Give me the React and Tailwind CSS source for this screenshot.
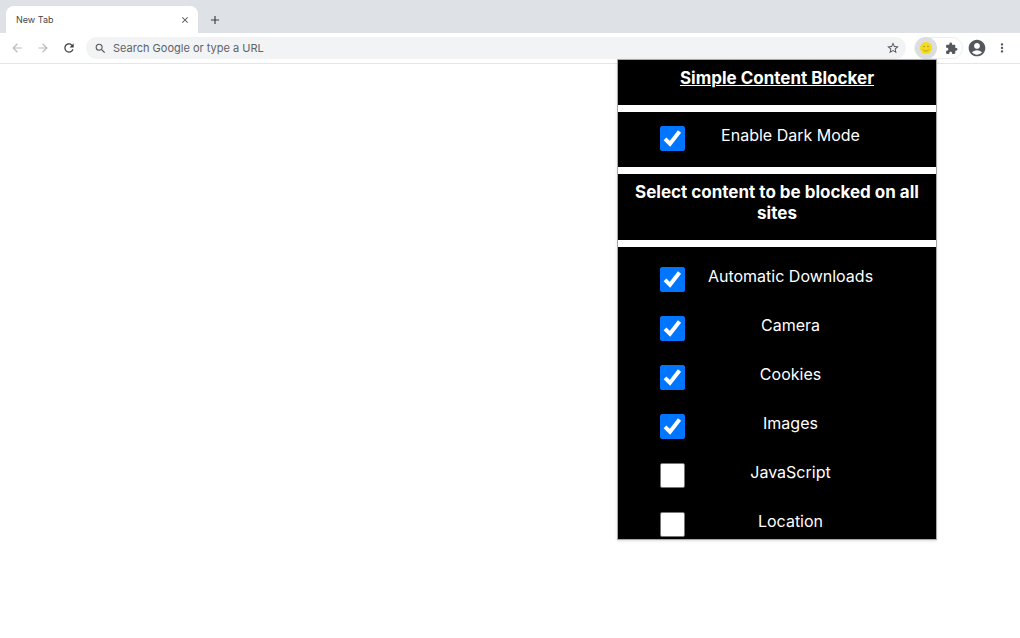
import React, { useState } from 'react';
import {
  MdAccountCircle,
  MdAdd,
  MdArrowBack,
  MdArrowForward,
  MdClose,
  MdExtension,
  MdMoreVert,
  MdRefresh,
  MdSearch,
  MdStarBorder,
} from 'react-icons/md';

const contentTypes = [
  { id: 'downloads', label: 'Automatic Downloads' },
  { id: 'camera', label: 'Camera' },
  { id: 'cookies', label: 'Cookies' },
  { id: 'images', label: 'Images' },
  { id: 'javascript', label: 'JavaScript' },
  { id: 'location', label: 'Location' },
];

const SmileyIcon = () => (
  <svg viewBox="0 0 14 14" className="h-3.5 w-3.5">
    <circle cx="7" cy="7" r="6" fill="#f2dc1c" />
    <circle cx="5" cy="5.5" r="0.8" fill="#a3922a" />
    <circle cx="9" cy="5.5" r="0.8" fill="#a3922a" />
    <path d="M4 8.5c1.2 2 4.8 2 6 0" fill="none" stroke="#b8a31c" strokeWidth="1" />
  </svg>
);

const CheckRow = ({ id, label, checked, onChange }) => (
  <div className="flex pl-[42px] pr-10">
    <span className="relative h-[25px] w-[25px] shrink-0">
      <input
        id={id}
        type="checkbox"
        checked={checked}
        onChange={onChange}
        className="block h-[25px] w-[25px] appearance-none rounded-xs border border-[#767676] bg-white checked:border-[#0075ff] checked:bg-[#0075ff]"
      />
      {checked && (
        <svg viewBox="0 0 25 25" className="pointer-events-none absolute inset-0 h-full w-full">
          <path d="M5 12.8l5 5L19.5 5.500" fill="none" stroke="#fff" strokeWidth="4" />
        </svg>
      )}
    </span>
    <label htmlFor={id} className="flex-1 text-center text-base leading-[18px]">
      {label}
    </label>
  </div>
);

const TabStrip = () => (
  <div className="flex h-[33px] items-end bg-[#dee1e6] pl-1.5">
    <div className="flex h-[27px] w-48 items-center justify-between rounded-t-lg bg-white pl-2.5 pr-2 text-[#45494d]">
      <span className="text-[9px]">New Tab</span>
      <button aria-label="Close tab">
        <MdClose size={10} />
      </button>
    </div>
    <button aria-label="New tab" className="flex h-[27px] items-center pl-2.5 text-[#3c4043]">
      <MdAdd size={14} />
    </button>
  </div>
);

const Toolbar = () => (
  <div className="flex h-[31px] items-center border-b border-[#e4e6e8] pl-2.5 pr-[11px] text-[#54585c]">
    <div className="flex gap-3">
      <button aria-label="Back" className="text-[#b9bbbe]">
        <MdArrowBack size={14} />
      </button>
      <button aria-label="Forward" className="text-[#b9bbbe]">
        <MdArrowForward size={14} />
      </button>
      <button aria-label="Reload" className="text-[#3c4043]">
        <MdRefresh size={14} />
      </button>
    </div>
    <div className="ml-2.5 flex h-[22px] flex-1 items-center rounded-full bg-[#f1f3f4] pl-2 pr-1.5">
      <MdSearch size={13} />
      <input
        type="text"
        aria-label="Address and search bar"
        placeholder="Search Google or type a URL"
        className="ml-1.5 min-w-0 flex-1 bg-transparent text-[11px] outline-none placeholder:text-[#5f6368]"
      />
      <button aria-label="Bookmark this tab">
        <MdStarBorder size={14} />
      </button>
    </div>
    <div className="ml-2 flex h-[22px] items-center rounded-full border border-[#eceef0] pr-1">
      <button
        aria-label="Simple Content Blocker"
        className="flex h-[22px] w-[22px] items-center justify-center rounded-full bg-[#dcdde0]"
      >
        <SmileyIcon />
      </button>
      <button aria-label="Extensions" className="ml-2">
        <MdExtension size={13} />
      </button>
    </div>
    <button aria-label="Profile" className="ml-1">
      <MdAccountCircle size={20} />
    </button>
    <button aria-label="Menu" className="ml-2">
      <MdMoreVert size={14} />
    </button>
  </div>
);

const Popup = () => {
  const [darkMode, setDarkMode] = useState(true);
  const [blocked, setBlocked] = useState(['downloads', 'camera', 'cookies', 'images']);

  const toggle = (id) => {
    setBlocked(blocked.includes(id) ? blocked.filter((b) => b !== id) : [...blocked, id]);
  };

  return (
    <div className="absolute right-[83px] top-[59px] flex w-80 flex-col gap-[7px] border border-[#a8a8a8] bg-white text-white shadow-sm">
      <header className="bg-black pt-2 pb-4">
        <h1 className="text-center text-[17px] leading-[21px] font-bold underline">
          Simple Content Blocker
        </h1>
      </header>

      <section className="bg-black pt-3.5 pb-4">
        <CheckRow
          id="dark-mode"
          label="Enable Dark Mode"
          checked={darkMode}
          onChange={() => setDarkMode(!darkMode)}
        />
      </section>

      <section className="bg-black px-3 pt-2 pb-4">
        <h2 className="text-center text-[17px] leading-[21px] font-bold">
          Select content to be blocked on all sites
        </h2>
      </section>

      <section className="flex flex-col gap-6 bg-black pt-5 pb-0.5">
        {contentTypes.map((type) => (
          <CheckRow
            key={type.id}
            id={type.id}
            label={type.label}
            checked={blocked.includes(type.id)}
            onChange={() => toggle(type.id)}
          />
        ))}
      </section>
    </div>
  );
};

export default function App() {
  return (
    <div className="relative min-h-screen bg-white font-['Inter',sans-serif]">
      <TabStrip />
      <Toolbar />
      <Popup />
    </div>
  );
}
